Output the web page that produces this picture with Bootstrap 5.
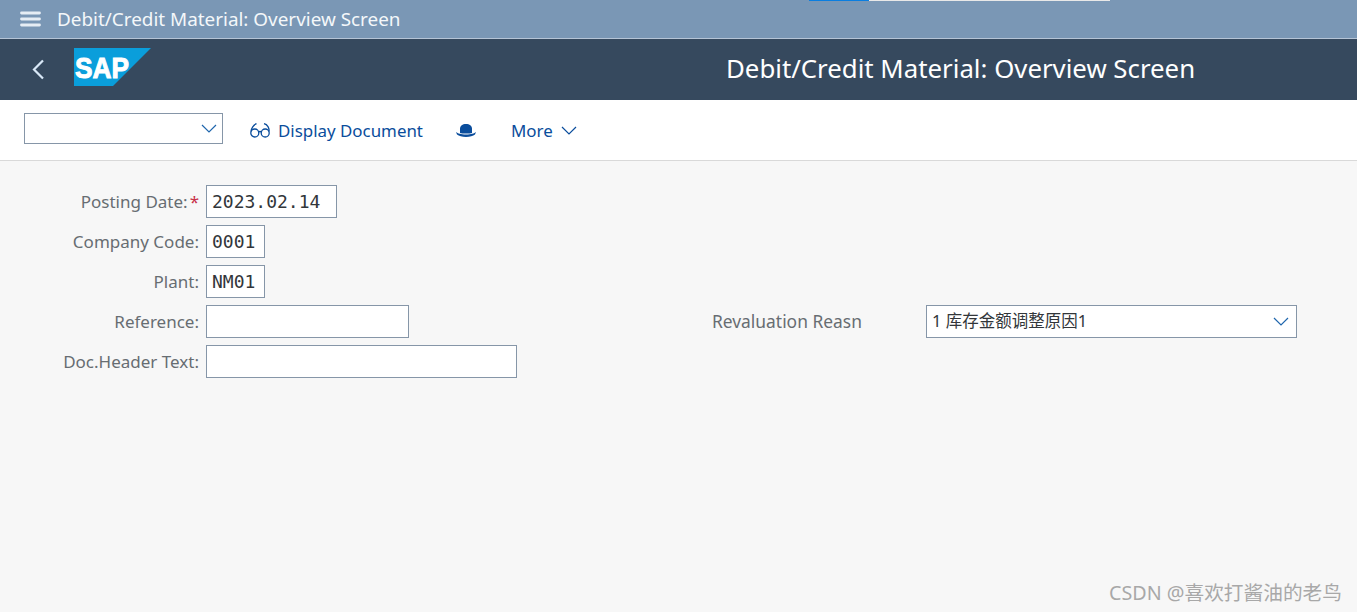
<!DOCTYPE html>
<html lang="en">
<head>
    <meta charset="UTF-8">
    <meta name="viewport" content="width=device-width, initial-scale=1.0">
    <title>Debit/Credit Material: Overview Screen</title>
    <link rel="stylesheet" href="https://cdn.jsdelivr.net/npm/bootstrap@5.3.2/dist/css/bootstrap.min.css">
    <style>
        html, body {
            height: 100%;
        }
        body {
            background-color: #f7f7f7;
            font-family: "Noto Sans", "Noto Sans CJK SC", sans-serif;
            overflow: hidden;
            position: relative;
        }
        .loader-strip {
            position: absolute;
            top: 0;
            left: 809px;
            width: 301px;
            height: 1px;
            background: linear-gradient(to right, #0a7ee0 60px, #e8e8e8 60px);
        }
        .title-bar {
            height: 39px;
            background-color: #7a97b5;
            border-bottom: 1px solid #b5c4d6;
            padding-left: 20px;
            color: #f4f7fa;
            font-size: 18.9px;
            gap: 16px;
        }
        .app-bar {
            height: 61px;
            background-color: #36495e;
            padding-left: 32px;
            padding-bottom: 5px;
        }
        .back-btn {
            width: 42px;
            margin-top: 2px;
        }
        .app-title {
            position: absolute;
            left: 726px;
            top: 51px;
            color: #fff;
            font-size: 25.8px;
            line-height: 34px;
        }
        .tool-bar {
            height: 61px;
            background-color: #fff;
            border-bottom: 1px solid #d9d9d9;
            padding-left: 24px;
            padding-top: 1px;
            color: #0a4d9c;
            font-size: 16.9px;
        }
        .field-box {
            height: 33px;
            border: 1px solid #8696a8;
            border-radius: 0;
            background-color: #fff;
            padding: 0 5px;
            color: #32363a;
            line-height: 31px;
        }
        .mono-val {
            font-family: "DejaVu Sans Mono", monospace;
            font-size: 18px;
        }
        .tool-select {
            width: 199px;
            height: 31px;
            margin-bottom: 5px;
        }
        .form-area {
            padding-top: 24px;
        }
        .form-line {
            height: 33px;
            margin-bottom: 7px;
        }
        .field-label {
            width: 199px;
            margin-right: 7px;
            text-align: right;
            color: #676d72;
            font-size: 17px;
            white-space: nowrap;
        }
        .req-mark {
            color: #c8304a;
            margin-left: 2px;
        }
        .w-date { width: 131px; }
        .w-code { width: 59px; }
        .w-ref { width: 203px; }
        .w-head { width: 311px; }
        .right-block {
            margin-left: 303px;
        }
        .right-label {
            width: 214px;
            color: #676d72;
            font-size: 17.4px;
        }
        .reason-select {
            width: 371px;
            font-size: 16.5px;
            padding-right: 7px;
        }
        .reason-text {
            padding-bottom: 2px;
        }
        .wm-text {
            position: absolute;
            right: 15px;
            bottom: 4px;
            color: #a8a8a8;
            font-size: 19.7px;
        }
    </style>
</head>
<body>
    <div class="loader-strip"></div>

    <div class="title-bar d-flex align-items-center">
        <svg width="21" height="16" viewBox="0 0 21 16">
            <path d="M1.500 2h18M1.500 8h18M1.500 14h18" stroke="#e6edf4" stroke-width="2.800" stroke-linecap="round" fill="none"/>
        </svg>
        <span>Debit/Credit Material: Overview Screen</span>
    </div>

    <div class="app-bar d-flex align-items-center">
        <div class="back-btn">
            <svg width="13" height="21" viewBox="0 0 13 21">
                <path d="M11 1.500L2 10.500l9 9" stroke="#d9e8f7" stroke-width="2.200" fill="none"/>
            </svg>
        </div>
        <svg width="77" height="38" viewBox="0 0 77 38">
            <polygon points="0,0 77,0 39,38 0,38" fill="#0a9edb"/>
            <text x="1" y="30" fill="#fff" stroke="#fff" stroke-width="1" font-family="Liberation Sans" font-weight="700" font-size="30" textLength="54" lengthAdjust="spacingAndGlyphs">SAP</text>
        </svg>
    </div>
    <div class="app-title">Debit/Credit Material: Overview Screen</div>

    <div class="tool-bar d-flex align-items-center">
        <div class="field-box tool-select d-flex align-items-center justify-content-end">
            <svg width="16" height="9" viewBox="0 0 16 9"><path d="M1 1l7 7 7-7" stroke="#1f66ad" stroke-width="1.200" fill="none"/></svg>
        </div>
        <svg width="20" height="15" viewBox="0 0 20 15" style="margin-left:27px">
            <g fill="none" stroke="#0a4d9c" stroke-width="1.300">
                <circle cx="4.800" cy="10" r="4"/>
                <circle cx="15.200" cy="10" r="4"/>
                <path d="M8.500 9c1-.7 2-.7 3 0M1 8.500C1.500 5 3.500 2 6.500.7M19 8.500C19.500 5 17.500 1.500 14 .7"/>
            </g>
        </svg>
        <span style="margin-left:8px">Display Document</span>
        <svg width="20" height="13" viewBox="0 0 20 13" style="margin-left:33px">
            <path d="M4 9V5C4 1.500 6.500 0 10 0s6 1.500 6 5v4c-2 .8-10 .8-12 0z" fill="#0a4d9c"/>
            <path d="M0 8c2 1.500 4.500 2.500 10 2.500S18 9.500 20 8l-1 2.500C17 12 14 13 10 13S3 12 1 10.500z" fill="#0a4d9c"/>
        </svg>
        <span style="margin-left:35px">More</span>
        <svg class="ms-2" width="16" height="9" viewBox="0 0 16 9"><path d="M1 1l7 7 7-7" stroke="#0a4d9c" stroke-width="1.200" fill="none"/></svg>
    </div>

    <div class="form-area">
        <div class="form-line d-flex align-items-center">
            <div class="field-label">Posting Date:<span class="req-mark">*</span></div>
            <div class="field-box mono-val w-date">2023.02.14</div>
        </div>
        <div class="form-line d-flex align-items-center">
            <div class="field-label">Company Code:</div>
            <div class="field-box mono-val w-code">0001</div>
        </div>
        <div class="form-line d-flex align-items-center">
            <div class="field-label">Plant:</div>
            <div class="field-box mono-val w-code">NM01</div>
        </div>
        <div class="form-line d-flex align-items-center">
            <div class="field-label">Reference:</div>
            <div class="field-box w-ref"></div>
            <div class="right-block d-flex align-items-center">
                <div class="right-label">Revaluation Reasn</div>
                <div class="field-box reason-select d-flex align-items-center justify-content-between">
                    <span class="reason-text">1 库存金额调整原因1</span>
                    <svg width="16" height="9" viewBox="0 0 16 9"><path d="M1 1l7 7 7-7" stroke="#1f66ad" stroke-width="1.200" fill="none"/></svg>
                </div>
            </div>
        </div>
        <div class="form-line d-flex align-items-center">
            <div class="field-label">Doc.Header Text:</div>
            <div class="field-box w-head"></div>
        </div>
    </div>

    <div class="wm-text">CSDN @喜欢打酱油的老鸟</div>

    <script src="https://cdn.jsdelivr.net/npm/bootstrap@5.3.2/dist/js/bootstrap.bundle.min.js"></script>
</body>
</html>
